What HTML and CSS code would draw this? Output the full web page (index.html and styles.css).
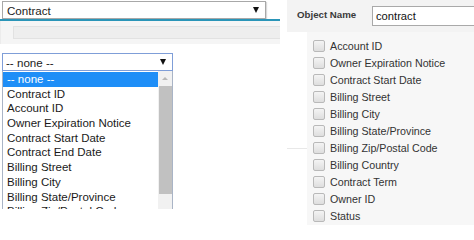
FILE: index.html
```html
<!DOCTYPE html>
<html>
<head>
<meta charset="utf-8">
<link rel="stylesheet" href="styles.css">
</head>
<body>
<div class="page">
  <div class="left">
    <div class="sel sel-top"><span>Contract</span><span class="arrow"></span></div>
    <div class="rule"></div>
    <div class="panel"><div class="bar"></div></div>
    <div class="sel sel-second"><span>-- none --</span><span class="arrow"></span></div>
    <div class="listbox">
      <div class="opts">
        <div class="opt active">-- none --</div>
        <div class="opt">Contract ID</div>
        <div class="opt">Account ID</div>
        <div class="opt">Owner Expiration Notice</div>
        <div class="opt">Contract Start Date</div>
        <div class="opt">Contract End Date</div>
        <div class="opt">Billing Street</div>
        <div class="opt">Billing City</div>
        <div class="opt">Billing State/Province</div>
        <div class="opt">Billing Zip/Postal Code</div>
      </div>
      <div class="sbar">
        <div class="sbtn"><span class="up"></span></div>
        <div class="thumb"></div>
      </div>
    </div>
  </div>
  <div class="right">
    <div class="header">
      <span class="lbl">Object Name</span>
      <div class="input">contract</div>
    </div>
    <div class="body">
      <div class="gutter"><div class="tick"></div></div>
      <div class="checks">
        <label class="row"><span class="cb"></span>Account ID</label>
        <label class="row"><span class="cb"></span>Owner Expiration Notice</label>
        <label class="row"><span class="cb"></span>Contract Start Date</label>
        <label class="row"><span class="cb"></span>Billing Street</label>
        <label class="row"><span class="cb"></span>Billing City</label>
        <label class="row"><span class="cb"></span>Billing State/Province</label>
        <label class="row"><span class="cb"></span>Billing Zip/Postal Code</label>
        <label class="row"><span class="cb"></span>Billing Country</label>
        <label class="row"><span class="cb"></span>Contract Term</label>
        <label class="row"><span class="cb"></span>Owner ID</label>
        <label class="row"><span class="cb"></span>Status</label>
      </div>
    </div>
  </div>
</div>
</body>
</html>
```

FILE: styles.css
```css
html, body {
  margin: 0;
  padding: 0;
  background: #ffffff;
}
body {
  width: 474px;
  height: 225px;
  overflow: hidden;
  font-family: "Liberation Sans", Arial, sans-serif;
  color: #222;
}
.page {
  display: flex;
  width: 474px;
  height: 225px;
}
.left {
  width: 280px;
  flex: none;
  display: flex;
  flex-direction: column;
}
.sel {
  box-sizing: border-box;
  display: flex;
  align-items: center;
  justify-content: space-between;
  background: #fff;
  font-size: 11.6px;
  padding: 0 6px 0 4px;
}
.sel-top {
  margin: 1px 0 0 2px;
  width: 264px;
  height: 18px;
  border: 1px solid #a8a8a8;
  box-shadow: 1px 1px 1px rgba(0,0,0,0.15);
}
.sel-second {
  margin: 9px 0 0 2px;
  width: 171px;
  height: 18px;
  border: 1px solid #7f9ed8;
  padding-left: 3px;
}
.arrow {
  width: 0;
  height: 0;
  border-left: 3px solid transparent;
  border-right: 3px solid transparent;
  border-top: 6px solid #111;
}
.rule {
  height: 2px;
  background: #2a95b8;
  margin-top: 0;
}
.panel {
  height: 23px;
  background: #f5f5f5;
  border-left: 1px solid #ececec;
  display: flex;
  align-items: flex-start;
  padding: 5px 0 0 12px;
  box-sizing: border-box;
}
.bar {
  flex: 1;
  height: 11px;
  background: #eeeeee;
  border: 1px solid #e2e2e2;
  border-right: none;
}
.listbox {
  margin-left: 2px;
  width: 171px;
  height: 138px;
  box-sizing: border-box;
  border: 1px solid #a9b4c6;
  border-top: none;
  border-bottom: none;
  display: flex;
  overflow: hidden;
  background: #fff;
}
.opts {
  flex: 1;
  overflow: hidden;
  padding-top: 1px;
}
.opt {
  height: 14.7px;
  line-height: 14.7px;
  font-size: 11.5px;
  padding-left: 4px;
  white-space: nowrap;
  color: #1a1a1a;
}
.opt.active {
  background: #1e8ef7;
  color: #fff;
}
.sbar {
  width: 14px;
  flex: none;
  background: #f1f1f1;
  display: flex;
  flex-direction: column;
  align-items: center;
}
.sbtn {
  height: 15px;
  display: flex;
  align-items: center;
  justify-content: center;
}
.up {
  width: 0;
  height: 0;
  border-left: 3px solid transparent;
  border-right: 3px solid transparent;
  border-bottom: 3px solid #b8b8b8;
}
.thumb {
  width: 13px;
  height: 108px;
  background: #c1c1c1;
}
.right {
  margin-left: 7px;
  flex: 1;
  display: flex;
  flex-direction: column;
}
.header {
  height: 32px;
  background: #f3f3f3;
  display: flex;
  align-items: center;
  padding-left: 10px;
  box-sizing: border-box;
}
.lbl {
  font-weight: bold;
  font-size: 9.7px;
  color: #3a3a3a;
  width: 75px;
  margin-top: -3px;
}
.input {
  flex: 1;
  height: 20px;
  box-sizing: border-box;
  border: 1px solid #a9a9a9;
  border-right: none;
  background: #fff;
  font-size: 11.2px;
  line-height: 18px;
  padding-left: 3px;
  color: #111;
}
.body {
  flex: 1;
  display: flex;
}
.gutter {
  width: 20px;
  flex: none;
  padding-top: 116px;
}
.tick {
  height: 1px;
  background: #e8e8e8;
}
.checks {
  flex: 1;
  background: #f7f7f7;
  padding-top: 5px;
  display: flex;
  flex-direction: column;
}
.row {
  height: 17px;
  display: flex;
  align-items: center;
  font-size: 10.7px;
  color: #333;
  white-space: nowrap;
}
.cb {
  width: 10px;
  height: 10px;
  margin: 0 5px 0 6px;
  border: 1px solid #b9b9b9;
  border-radius: 2px;
  background: linear-gradient(#f4f4f4, #dedede);
  flex: none;
}
```
